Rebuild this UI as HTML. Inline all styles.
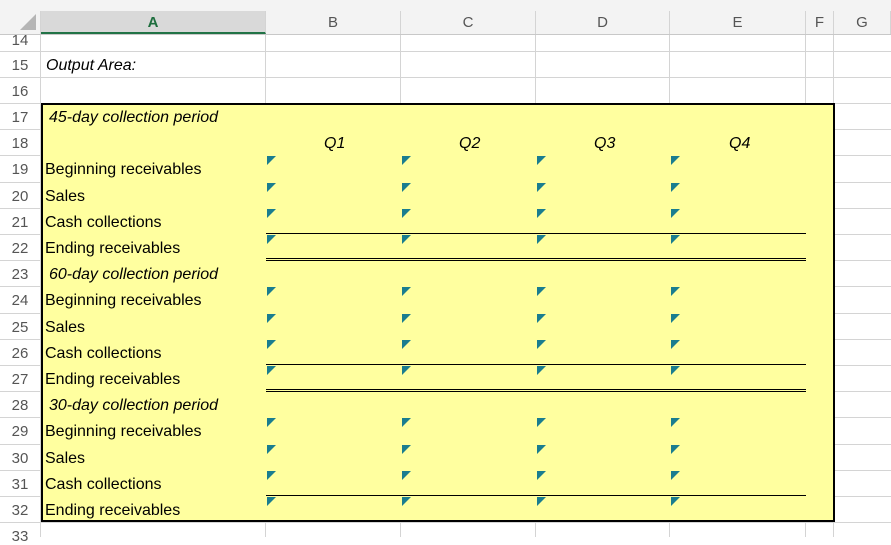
<!DOCTYPE html>
<html><head><style>
body{margin:0;width:891px;height:537px;overflow:hidden;background:#fff;font-family:"Liberation Sans",sans-serif;position:relative}
.a{position:absolute}
.hl{position:absolute;height:1px;background:#d4d4d4}
.vl{position:absolute;width:1px;background:#d4d4d4}
.ch{position:absolute;top:11px;height:23px;background:#f3f3f3;color:#555;font-size:15px;text-align:center;line-height:23px;border-right:1px solid #d4d4d4;box-sizing:border-box;z-index:5}
.rn{position:absolute;left:0;width:40px;text-align:center;color:#555;font-size:15px}
.t{position:absolute;font-size:16px;color:#000;white-space:nowrap}
.tri{position:absolute;width:0;height:0;border-top:9px solid #1a7d8f;border-right:9px solid transparent}
</style></head><body>
<div class="a" style="left:0;top:0;width:891px;height:11px;background:#f3f3f3;z-index:5"></div>
<div class="a" style="left:0;top:11px;width:41px;height:23px;background:#f3f3f3;border-right:1px solid #d4d4d4;box-sizing:border-box;z-index:5"></div>
<div class="a" style="left:20px;top:14px;width:0;height:0;border-bottom:16px solid #b5b5b5;border-left:16px solid transparent;z-index:6"></div>
<div class="ch" style="left:41px;width:225px;background:#d9d9d9;color:#1e6e3e;font-weight:bold;border-bottom:2px solid #217346">A</div>
<div class="ch" style="left:266px;width:135px">B</div>
<div class="ch" style="left:401px;width:135px">C</div>
<div class="ch" style="left:536px;width:134px">D</div>
<div class="ch" style="left:670px;width:136px">E</div>
<div class="ch" style="left:806px;width:28px">F</div>
<div class="ch" style="left:834px;width:57px">G</div>
<div class="a" style="left:0;top:34px;width:891px;height:1px;background:#c8c8c8;z-index:5"></div>
<div class="a" style="left:40px;top:34px;width:1px;height:503px;background:#d4d4d4"></div>
<div id="grid"></div>
<div class="a" style="left:41px;top:103px;width:794px;height:419px;background:#ffff9f;border:2px solid #000;box-sizing:border-box"></div>
<script>
var g='';
var cols=[266,401,536,670,806,834];
for(var n=15;n<=33;n++){var y=Math.round(103+(n-17)*26.2);g+='<div class="hl" style="left:0;top:'+y+'px;width:891px"></div>';}
cols.forEach(function(x){g+='<div class="vl" style="left:'+(x-1)+'px;top:34px;height:503px"></div>';});
document.getElementById('grid').innerHTML=g;
</script>
<div id="d"></div>
<script>
var s='';
function rt(n){return Math.round(103+(n-17)*26.2);}
s+='<div class="rn" style="top:32px">14</div>';
for(var n=15;n<=33;n++){s+='<div class="rn" style="top:'+(rt(n)+6)+'px">'+n+'</div>';}
s+='<div class="t" style="left:46px;top:57px;font-style:italic">Output Area:</div>';
var labels={17:['45-day collection period',1],19:['Beginning receivables'],20:['Sales'],21:['Cash collections'],22:['Ending receivables'],23:['60-day collection period',1],24:['Beginning receivables'],25:['Sales'],26:['Cash collections'],27:['Ending receivables'],28:['30-day collection period',1],29:['Beginning receivables'],30:['Sales'],31:['Cash collections'],32:['Ending receivables']};
for(var n in labels){var L=labels[n];
s+='<div class="t" style="left:'+(L[1]?49:45)+'px;top:'+(rt(+n)+6)+'px;'+(L[1]?'font-style:italic':'')+'">'+L[0]+'</div>';}
var cx=[333,468,603,738];
['Q1','Q2','Q3','Q4'].forEach(function(q,i){s+='<div class="t" style="left:'+(cx[i]-9)+'px;top:'+(rt(18)+6)+'px;font-style:italic">'+q+'</div>';});
var tx=[267,402,537,671];
[19,20,21,22,24,25,26,27,29,30,31,32].forEach(function(n){tx.forEach(function(x){s+='<div class="tri" style="left:'+x+'px;top:'+(rt(n)+1)+'px"></div>';});});
[22,27,32].forEach(function(n){var y=rt(n)-1;s+='<div class="a" style="left:266px;top:'+y+'px;width:540px;height:1px;background:#000"></div>';
if(n<32){var b=rt(n+1)-2;s+='<div class="a" style="left:266px;top:'+b+'px;width:540px;height:1px;background:#000"></div><div class="a" style="left:266px;top:'+(b+2)+'px;width:540px;height:1px;background:#000"></div>';}});
document.getElementById('d').innerHTML=s;
</script>
</body></html>
